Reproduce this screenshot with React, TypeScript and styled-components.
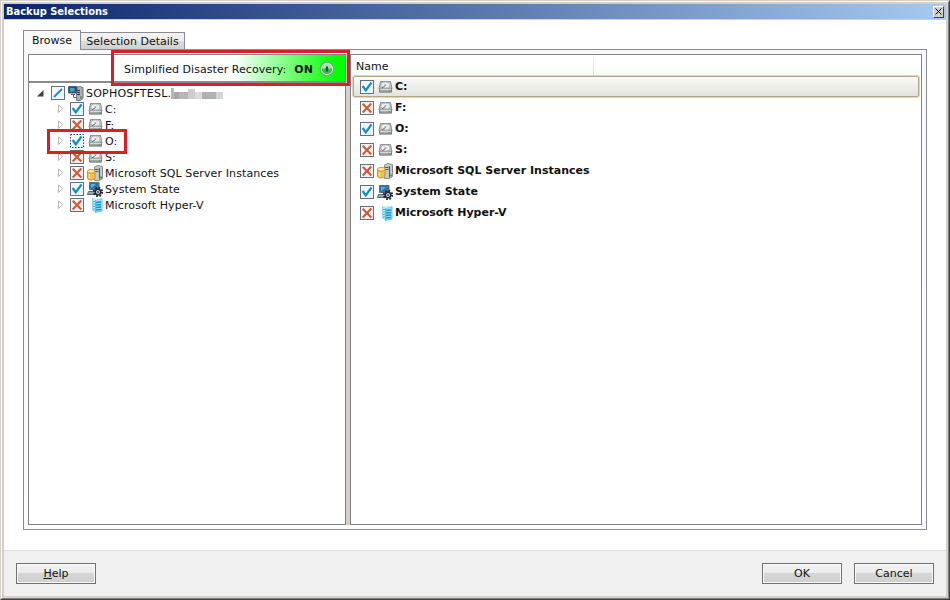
import React from 'react'
import styled, { createGlobalStyle, css } from 'styled-components'

const GlobalStyle = createGlobalStyle`
  * {
    box-sizing: border-box;
  }
  body {
    margin: 0;
    font-family: Verdana, 'DejaVu Sans', sans-serif;
    font-size: 11px;
    color: #111;
    overflow: hidden;
  }
  svg {
    display: block;
    flex: none;
  }
`

const Dialog = styled.div`
  width: 950px;
  height: 600px;
  display: flex;
  border: 1px solid #d4d0c8;
  border-right-color: #404040;
  border-bottom-color: #453f45;
`

const Frame = styled.div`
  flex: 1;
  display: flex;
  flex-direction: column;
  border: 1px solid #fff;
  border-right-color: #808080;
  border-bottom-color: #808080;
  outline: 2px solid #d4d0c8;
  outline-offset: -3px;
  padding: 2px;
  background: #fff;
`

const TitleBar = styled.div`
  height: 15px;
  display: flex;
  align-items: center;
  justify-content: space-between;
  padding: 0 2px;
  background: linear-gradient(90deg, #0a246a, #a6caf0);
  color: #fff;
  font-family: Tahoma, 'DejaVu Sans Condensed', 'DejaVu Sans', sans-serif;
  font-stretch: condensed;
  font-size: 11px;
  font-weight: bold;
  line-height: 15px;
`

const CloseButton = styled.div`
  width: 11px;
  height: 12px;
  display: flex;
  align-items: center;
  justify-content: center;
  background: #d4d0c8;
  border: 1px solid #fff;
  border-right-color: #404040;
  border-bottom-color: #404040;
`

const Body = styled.div`
  flex: 1;
  border-top: 1px solid #d4d0c8;
  padding: 10px 19px 0;
`

const Tabs = styled.div`
  height: 19px;
  display: flex;
  align-items: flex-end;
`

const Tab = styled.div<{ $active?: boolean; $width: number }>`
  width: ${p => p.$width}px;
  height: 17px;
  line-height: 17px;
  text-align: center;
  border: 1px solid #898c95;
  border-left: 0;
  border-bottom: 0;
  background: linear-gradient(#f3f3f3, #ebebeb 50%, #dddddd 50%, #d0d0d0);
  ${p =>
    p.$active &&
    css`
      height: 20px;
      line-height: 20px;
      margin-bottom: -1px;
      border-left: 1px solid #898c95;
      background: #f9f9f9;
      position: relative;
    `}
`

const TabPanel = styled.div`
  width: 904px;
  height: 481px;
  border: 1px solid #898c95;
  background: linear-gradient(#f8f8f8, #fcfcfc);
  padding: 4px;
  display: flex;
`

const LeftPane = styled.div`
  width: 318px;
  height: 471px;
  border: 1px solid #828282;
  background: #fff;
`

const Splitter = styled.div`
  width: 4px;
  height: 471px;
  background: #d4d0c8;
`

const RightPane = styled.div`
  width: 572px;
  height: 471px;
  border: 1px solid #828282;
  background: #fff;
`

const LeftHeader = styled.div`
  height: 28px;
  border-bottom: 2px solid #8a8a8a;
  display: flex;
  justify-content: flex-end;
  position: relative;
`

const RecoveryStatus = styled.div`
  width: 231px;
  display: flex;
  align-items: center;
  padding: 2px 0 0 10px;
  background: linear-gradient(90deg, #fff 52%, #00ff00 97%);
  white-space: nowrap;

  b {
    margin: 0 6px 0 8px;
    padding-top: 1px;
    letter-spacing: 0.3px;
  }
`

const Callout = styled.div<{ $x: number; $y: number; $w: number; $h: number }>`
  position: absolute;
  left: ${p => p.$x}px;
  top: ${p => p.$y}px;
  width: ${p => p.$w}px;
  height: ${p => p.$h}px;
  border: 3px solid #d9202a;
  z-index: 2;
`

const Tree = styled.div`
  padding-top: 2px;
`

const TreeRow = styled.div<{ $root?: boolean }>`
  height: 16px;
  display: flex;
  align-items: center;
  position: relative;
  padding-left: ${p => (p.$root ? 6 : 27)}px;
`

const Expander = styled.div<{ $root?: boolean }>`
  width: ${p => (p.$root ? 16 : 14)}px;
`

const IconSlot = styled.div`
  width: 18px;
  height: 16px;
  display: flex;
  align-items: center;
  margin-left: 3px;
`

const Label = styled.span<{ $spacing?: number }>`
  white-space: nowrap;
  line-height: 16px;
  padding-top: 1px;
  letter-spacing: ${p => p.$spacing || 0}px;
`

const Redacted = styled.div`
  display: flex;
  align-items: flex-end;
  height: 11px;
`

const Block = styled.span<{ $w: number; $h: number; $color: string }>`
  width: ${p => p.$w}px;
  height: ${p => p.$h}px;
  background: ${p => p.$color};
`

const ListHeader = styled.div`
  height: 21px;
  display: flex;
  background: linear-gradient(#fff 40%, #f7fafc);
  line-height: 23px;
`

const ColumnName = styled.div`
  width: 243px;
  padding-left: 5px;
  border-right: 1px solid;
  border-image: linear-gradient(#f4f4f4, #d0d3d5) 1;
`

const ListRow = styled.div<{ $selected?: boolean }>`
  height: 21px;
  margin: 0 2px;
  padding-left: 7px;
  display: flex;
  align-items: center;
  font-weight: bold;
  ${p =>
    p.$selected &&
    css`
      padding-left: 6px;
      border: 1px solid #b3a785;
      border-radius: 2px;
      box-shadow: 0 0 0 1px #ddd6bf;
      background: linear-gradient(#fafaf9, #e2e2de);
    `}
`

const Footer = styled.div`
  height: 46px;
  display: flex;
  align-items: center;
  padding: 0 12px;
  gap: 12px;
  border-top: 1px solid #dfdfdf;
  background: #f0f0f0;
`

const Button = styled.div`
  width: 80px;
  height: 21px;
  border: 1px solid #707070;
  box-shadow: inset 0 0 0 1px #fafafa;
  background: linear-gradient(#f2f2f2, #ebebeb 50%, #d6d6d6 50%, #cfcfcf);
  text-align: center;
  line-height: 20px;
`

const Spacer = styled.div`
  flex: 1;
`

type State = 'on' | 'off' | 'partial'
type IconName = 'drive' | 'sql' | 'system' | 'hyperv'

function CheckBox({ state, focus }: { state: State; focus?: boolean }) {
  return (
    <svg width="14" height="14" viewBox="0 0 14 14">
      <rect
        x="0.5"
        y="0.5"
        width="13"
        height="13"
        fill={state === 'off' ? '#f4f1ef' : '#eef7fb'}
        stroke={focus ? '#243b48' : '#62717b'}
        strokeDasharray={focus ? '1.5 1.5' : undefined}
      />
      {state === 'on' && <path d="M2.6 6 5.8 10.3 11.5 2.5" fill="none" stroke="#168bc6" strokeWidth="2.2" />}
      {state === 'off' && <path d="M2.7 2.7 11.3 11.5M11.3 2.5 2.7 11.5" stroke="#d3573b" strokeWidth="2.1" />}
      {state === 'partial' && <path d="M3 11 11 3" stroke="#168bc6" strokeWidth="1.8" />}
    </svg>
  )
}

function DriveIcon() {
  return (
    <svg width="16" height="16" viewBox="0 0 16 16">
      <path d="M3.500 2.500h10l1.500 7.500H2z" fill="#b9bcbe" stroke="#8d9194" />
      <path d="M2 9.500h13v4H2z" fill="#a6a9ac" />
      <path d="M2.500 9.500v3.500h12V9.500" fill="none" stroke="#7d8184" />
      <ellipse cx="8.500" cy="6" rx="4.600" ry="3" fill="#eceeef" stroke="#a4a8ab" strokeWidth="0.800" />
      <ellipse cx="8.500" cy="5.700" rx="1.200" ry="0.800" fill="#b0b4b6" />
      <path d="M8.500 6.500 5 9" stroke="#606467" />
      <path d="M3 10.500h11" stroke="#d6d8d9" />
      <path d="M11.500 11.800h2" stroke="#4e9c53" />
    </svg>
  )
}

function ServerIcon() {
  return (
    <svg width="16" height="16" viewBox="0 0 16 16">
      <path d="M8.500 2.500l3-1 3.500 1v11l-2.500 2h-4z" fill="#a9b1b6" stroke="#70787d" />
      <path d="M9 5.500h3M9 7.500h3M9 9.500h3" stroke="#333" />
      <path d="M12 12.500h2" stroke="#3f9c45" strokeWidth="2" />
      <path d="M0.500 1.500h8.500v6.500h-8.500z" fill="#24526f" stroke="#56656e" />
      <path d="M2 3h4.500v3.500h-4.500z" fill="#4aa0cf" />
      <path d="M3 9.500h4M5.500 10v2.500h3" stroke="#55636b" fill="none" />
    </svg>
  )
}

function SqlIcon() {
  return (
    <svg width="16" height="16" viewBox="0 0 16 16">
      <path d="M7.500 2 11 0.500l4.500 1v12l-3 2h-5z" fill="#c6ccc9" stroke="#858c89" />
      <path d="M12.500 3v11.500" stroke="#5b6462" strokeWidth="1.200" />
      <path d="M8 4.500h3.500M8 6.500h3.500" stroke="#4d5856" />
      <path d="M13.200 12.500h1.800" stroke="#39a23d" strokeWidth="2" />
      <path d="M0.500 6.500v6.500c0 2.600 7.500 2.600 7.500 0V6.500" fill="#f0c453" stroke="#c4933a" />
      <ellipse cx="4.250" cy="6.300" rx="3.750" ry="1.900" fill="#fce9a6" stroke="#c99a36" />
      <path d="M2.500 9v4" stroke="#fae28e" />
    </svg>
  )
}

function SystemIcon() {
  return (
    <svg width="16" height="16" viewBox="0 0 16 16">
      <path d="M2.500 1.500h9.500v7h-9.500z" fill="#2878b4" stroke="#5e6970" />
      <path d="M4 3h5l-5 4z" fill="#5fb0e0" />
      <path d="M1.500 10.500h8v3h-9z" fill="#9aa6ae" stroke="#5b6871" />
      <circle cx="11" cy="11" r="4" fill="none" stroke="#1f2633" strokeWidth="2.400" strokeDasharray="1.600 1.540" />
      <circle cx="11" cy="11" r="2.700" fill="#e6ebf2" stroke="#1f2633" strokeWidth="1.500" />
      <circle cx="11" cy="11" r="0.900" fill="#1f2633" />
    </svg>
  )
}

function HyperVIcon() {
  return (
    <svg width="16" height="16" viewBox="0 0 16 16">
      <path d="M5.500 1.500 8.500 3v12L5.500 13z" fill="#c5ecf8" stroke="#74c9e6" strokeWidth="0.800" />
      <path d="M8.500 3 15 1.500V14l-6.500 1.500z" fill="#9be0f5" stroke="#52b9de" strokeWidth="0.800" />
      <path d="M5.500 1.500 11 0.500l4 1L8.500 3z" fill="#d9f3fb" />
      <path d="M9 5.500l5-.5M9 8l5-.5M9 10.500l5-.5M9 13l5-.5" stroke="#1696cb" strokeWidth="1.300" />
      <path d="M6 4.500h2M6 7h2M6 9.500h2M6 12h2" stroke="#3fb0da" />
    </svg>
  )
}

function PowerIcon() {
  return (
    <svg width="16" height="16" viewBox="0 0 16 16">
      <circle cx="8" cy="8" r="6.800" fill="#3dbb50" stroke="#6fa877" strokeWidth="1.200" />
      <path d="M2.500 7.500a5.500 5.500 0 0 1 11 0z" fill="#a5e2ad" />
      <circle cx="8" cy="8" r="5.700" fill="none" stroke="#d3f5d7" strokeWidth="0.900" />
      <path d="M8 5.500v5" stroke="#0b5820" strokeWidth="2.200" />
    </svg>
  )
}

const icons: Record<IconName, () => React.ReactElement> = {
  drive: DriveIcon,
  sql: SqlIcon,
  system: SystemIcon,
  hyperv: HyperVIcon,
}

const items: { name: string; state: State; icon: IconName; focus?: boolean }[] = [
  { name: 'C:', state: 'on', icon: 'drive' },
  { name: 'F:', state: 'off', icon: 'drive' },
  { name: 'O:', state: 'on', icon: 'drive', focus: true },
  { name: 'S:', state: 'off', icon: 'drive' },
  { name: 'Microsoft SQL Server Instances', state: 'off', icon: 'sql' },
  { name: 'System State', state: 'on', icon: 'system' },
  { name: 'Microsoft Hyper-V', state: 'off', icon: 'hyperv' },
]

// width, height, colour
const mosaic: [number, number, string][] = [
  [3, 11, '#b9b9bb'],
  [5, 7, '#aaa6aa'],
  [9, 7, '#b8b5b7'],
  [7, 10, '#cfcdcf'],
  [7, 7, '#dcdadd'],
  [14, 7, '#afb0b0'],
  [7, 7, '#d0d5d3'],
]

export default function App() {
  return (
    <>
      <GlobalStyle />
      <Dialog>
        <Frame>
          <TitleBar>
            Backup Selections
            <CloseButton>
              <svg width="7" height="7" viewBox="0 0 7 7">
                <path d="M0.500 0.500 6.500 6.500M6.500 0.500 0.500 6.500" stroke="#000" />
              </svg>
            </CloseButton>
          </TitleBar>
          <Body>
            <Tabs>
              <Tab $active $width={58}>Browse</Tab>
              <Tab $width={104}>Selection Details</Tab>
            </Tabs>
            <TabPanel>
              <LeftPane>
                <LeftHeader>
                  <RecoveryStatus>
                    <Label $spacing={0.05}>Simplified Disaster Recovery:</Label>
                    <b>ON</b>
                    <PowerIcon />
                  </RecoveryStatus>
                  <Callout $x={82} $y={-5} $w={239} $h={36} />
                </LeftHeader>
                <Tree>
                  <TreeRow $root>
                    <Expander $root>
                      <svg width="10" height="10" viewBox="0 0 10 10">
                        <path d="M8.500 2v6.500H2z" fill="#404040" />
                      </svg>
                    </Expander>
                    <CheckBox state="partial" />
                    <IconSlot>
                      <ServerIcon />
                    </IconSlot>
                    <Label $spacing={0.22}>SOPHOSFTESL.</Label>
                    <Redacted>
                      {mosaic.map(([w, h, color], i) => (
                        <Block key={i} $w={w} $h={h} $color={color} />
                      ))}
                    </Redacted>
                  </TreeRow>
                  {items.map(item => {
                    const Icon = icons[item.icon]
                    return (
                      <TreeRow key={item.name}>
                        <Expander>
                          <svg width="9" height="10" viewBox="0 0 9 10">
                            <path d="M2.500 1v7.500L6.500 4.700z" fill="#fff" stroke="#b4b4b4" />
                          </svg>
                        </Expander>
                        <CheckBox state={item.state} focus={item.focus} />
                        <IconSlot>
                          <Icon />
                        </IconSlot>
                        <Label $spacing={0.11}>{item.name}</Label>
                        {item.focus && <Callout $x={18} $y={-4} $w={80} $h={25} />}
                      </TreeRow>
                    )
                  })}
                </Tree>
              </LeftPane>
              <Splitter />
              <RightPane>
                <ListHeader>
                  <ColumnName>Name</ColumnName>
                </ListHeader>
                {items.map((item, i) => {
                  const Icon = icons[item.icon]
                  return (
                    <ListRow key={item.name} $selected={i === 0}>
                      <CheckBox state={item.state} />
                      <IconSlot>
                        <Icon />
                      </IconSlot>
                      <Label>{item.name}</Label>
                    </ListRow>
                  )
                })}
              </RightPane>
            </TabPanel>
          </Body>
          <Footer>
            <Button>
              <u>H</u>elp
            </Button>
            <Spacer />
            <Button>OK</Button>
            <Button>Cancel</Button>
          </Footer>
        </Frame>
      </Dialog>
    </>
  )
}
